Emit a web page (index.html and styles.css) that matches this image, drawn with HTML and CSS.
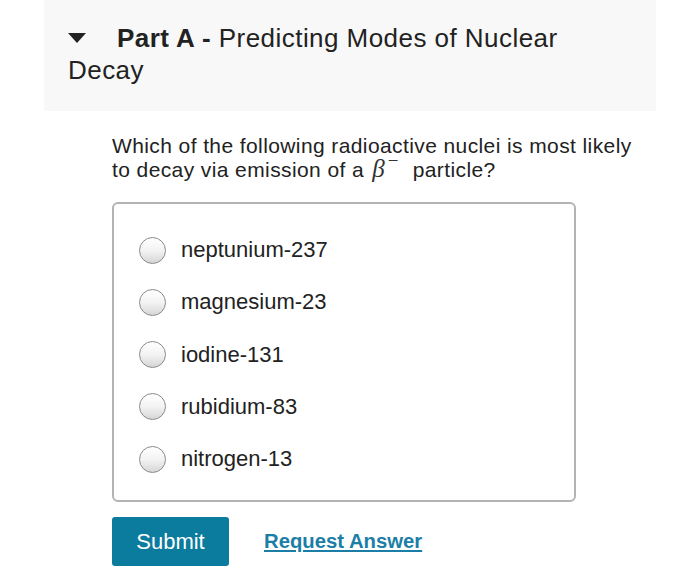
FILE: index.html
```html
<!DOCTYPE html>
<html>
<head>
<meta charset="utf-8">
<link rel="stylesheet" href="styles.css">
</head>
<body>
<div class="header">
  <h2 class="title"><span class="caret"></span><b>Part A -</b> Predicting Modes of Nuclear Decay</h2>
</div>
<div class="content">
  <p class="question">Which of the following radioactive nuclei is most likely to decay via emission of a <span class="math"><i class="beta">β</i><span class="minus">−</span></span> particle?</p>
  <div class="choices">
    <label class="choice"><span class="radio"></span><span class="label">neptunium-237</span></label>
    <label class="choice"><span class="radio"></span><span class="label">magnesium-23</span></label>
    <label class="choice"><span class="radio"></span><span class="label">iodine-131</span></label>
    <label class="choice"><span class="radio"></span><span class="label">rubidium-83</span></label>
    <label class="choice"><span class="radio"></span><span class="label">nitrogen-13</span></label>
  </div>
  <div class="actions">
    <button class="submit">Submit</button>
    <a class="request" href="#">Request Answer</a>
  </div>
</div>
</body>
</html>
```
FILE: styles.css
```css
html, body {
  margin: 0;
  padding: 0;
  background: #ffffff;
}
body {
  font-family: "Liberation Sans", Arial, sans-serif;
  color: #222;
}
.header {
  margin-left: 44px;
  width: 612px;
  height: 111px;
  background: #f8f8f8;
  box-sizing: border-box;
  padding: 22px 24px 0 24px;
}
.title {
  margin: 0;
  max-width: 510px;
  font-size: 26px;
  letter-spacing: 0.45px;
  line-height: 32px;
  font-weight: normal;
  color: #222;
}
.title b {
  font-weight: bold;
}
.caret {
  display: inline-block;
  width: 0;
  height: 0;
  border-left: 9px solid transparent;
  border-right: 9px solid transparent;
  border-top: 10px solid #222;
  margin-right: 31px;
  vertical-align: 4px;
}
.content {
  padding: 23px 0 0 112px;
}
.question {
  margin: 0;
  width: 540px;
  font-size: 21px;
  letter-spacing: 0.4px;
  line-height: 24px;
  color: #222;
}
.math {
  font-family: "Liberation Serif", "DejaVu Serif", serif;
  margin: 0 8px 0 2px;
  letter-spacing: 0;
  line-height: 0;
}
.beta {
  font-size: 25px;
  line-height: 0;
  color: #333;
}
.minus {
  font-style: normal;
  font-size: 19px;
  line-height: 0;
  vertical-align: 10px;
  margin-left: 3px;
  color: #333;
}
.choices {
  margin-top: 20px;
  width: 464px;
  height: 300px;
  box-sizing: border-box;
  border: 2px solid #b3b3b3;
  border-radius: 6px;
  padding: 33px 0 0 25px;
  display: flex;
  flex-direction: column;
  gap: 26.3px;
}
.choice {
  display: flex;
  align-items: center;
  height: 26px;
}
.radio {
  width: 27px;
  height: 27px;
  box-sizing: border-box;
  border-radius: 50%;
  border: 1.5px solid #8a8a8a;
  background: linear-gradient(to bottom, #ffffff 0%, #f3f3f3 50%, #d6d6d6 100%);
  margin-right: 15px;
  flex: none;
}
.label {
  font-size: 22px;
  color: #222;
}
.actions {
  margin-top: 15px;
  display: flex;
  align-items: center;
  gap: 35px;
}
.submit {
  width: 117px;
  height: 49px;
  background: #0b7b9e;
  color: #fff;
  border: none;
  border-radius: 3px;
  font-family: "Liberation Sans", Arial, sans-serif;
  font-size: 22px;
  padding: 0;
}
.request {
  font-size: 20.3px;
  font-weight: bold;
  color: #1b7ea6;
  text-decoration: underline;
  text-underline-offset: 2px;
}
```
